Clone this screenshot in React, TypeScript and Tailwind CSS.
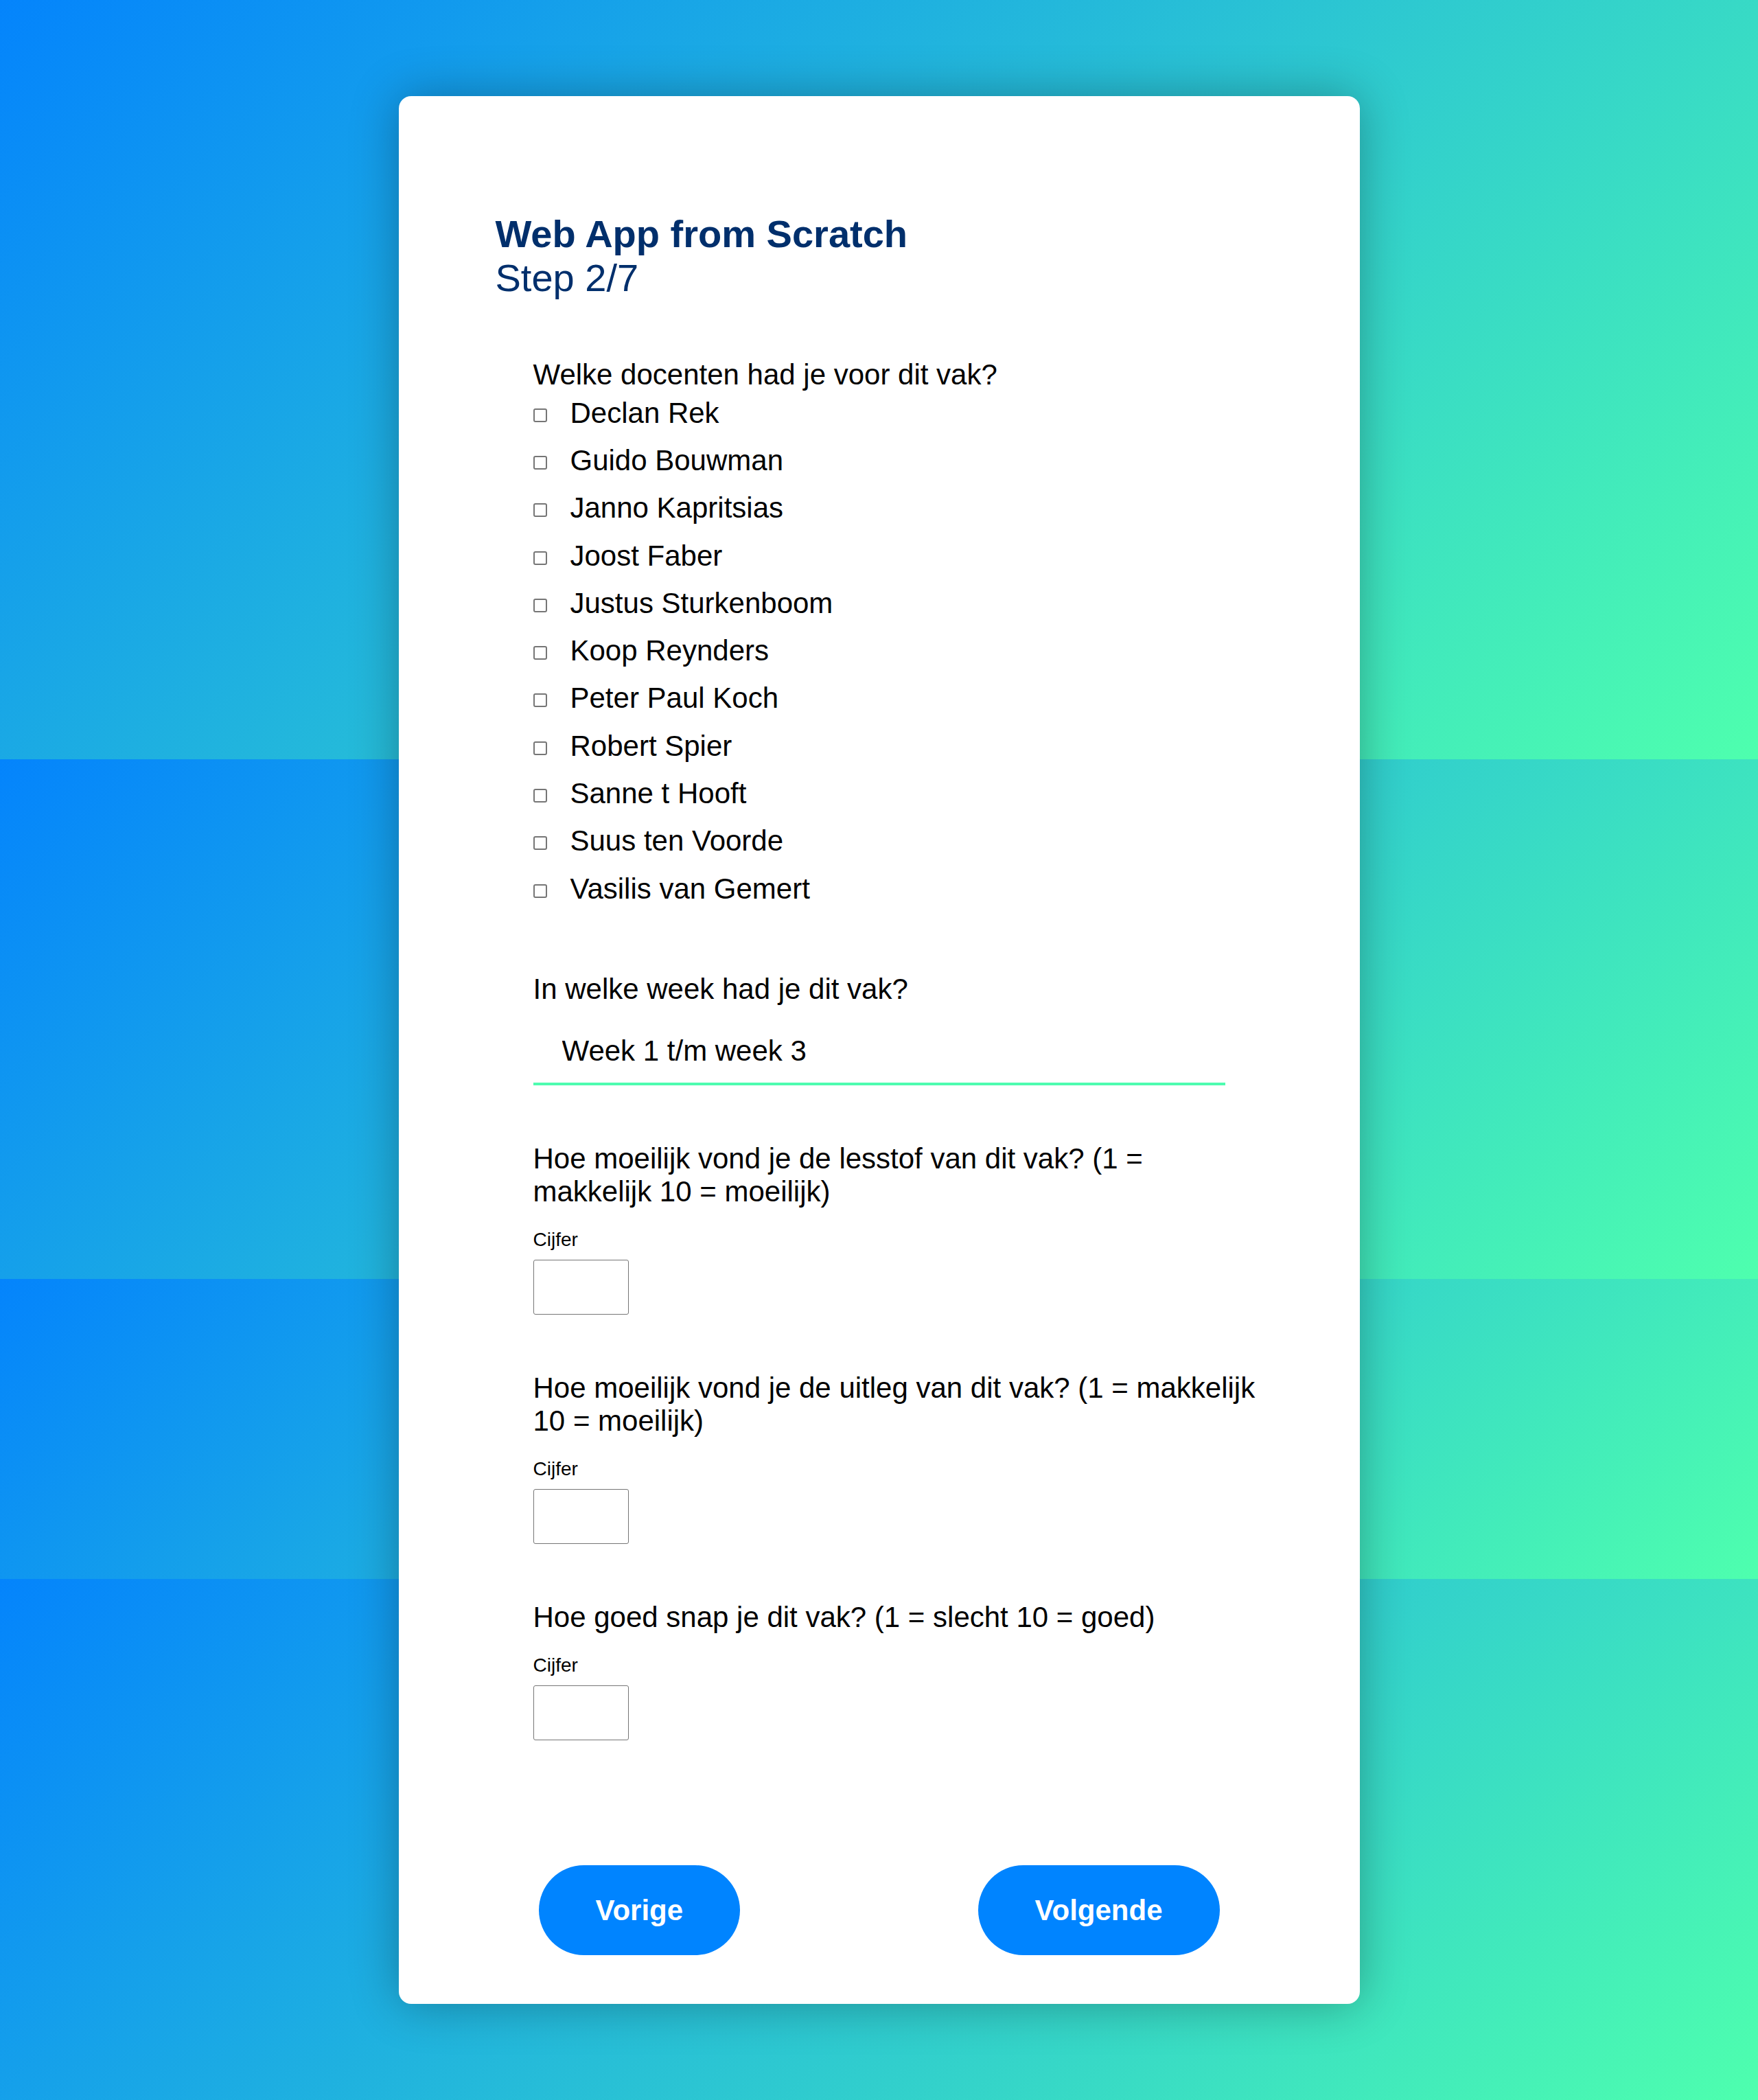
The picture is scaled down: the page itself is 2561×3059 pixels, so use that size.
import React from "react";

const teachers = [
  "Declan Rek",
  "Guido Bouwman",
  "Janno Kapritsias",
  "Joost Faber",
  "Justus Sturkenboom",
  "Koop Reynders",
  "Peter Paul Koch",
  "Robert Spier",
  "Sanne t Hooft",
  "Suus ten Voorde",
  "Vasilis van Gemert",
];

function Rating({ question }: { question: string }) {
  return (
    <div>
      <p className="mt-[83px] text-[42px] leading-[48px] text-black">{question}</p>
      <label className="mt-[30px] block text-[28px] leading-[32px] text-black">Cijfer</label>
      <input
        type="text"
        className="mt-[13px] block h-[80px] w-[139px] rounded-[3px] border border-[#767676] bg-white outline-none"
      />
    </div>
  );
}

export default function App() {
  return (
    <div className="relative min-h-[3059px] font-['Liberation_Sans',Arial,sans-serif]">
      <div className="absolute inset-0 flex flex-col">
        <div className="h-[1106px] flex-none bg-[linear-gradient(135deg,#0484fc,#4effae)]" />
        <div className="h-[757px] flex-none bg-[linear-gradient(135deg,#0484fc,#4effae)]" />
        <div className="h-[437px] flex-none bg-[linear-gradient(135deg,#0484fc,#4effae)]" />
        <div className="flex-1 bg-[linear-gradient(135deg,#0484fc,#4effae)]" />
      </div>
      <div className="relative pt-[140px] pb-[139px]">
        <div className="mx-auto w-[1400px] rounded-[18px] bg-white pt-[169px] pr-[141px] pb-[71px] pl-[141px] shadow-[0_0_70px_rgba(0,0,0,0.3)]">
          <h1 className="text-[56px] leading-[64px] text-[#002f6c]">
            <span className="block font-bold">Web App from Scratch</span>
            <span className="block font-normal">Step 2/7</span>
          </h1>
          <div className="pl-[55px]">
            <p className="mt-[85px] text-[42px] leading-[48px] text-black">
              Welke docenten had je voor dit vak?
            </p>
            <div className="mt-[-3px] flex flex-col">
              {teachers.map((t) => (
                <label key={t} className="flex h-[69.3px] items-center">
                  <span className="mt-[6px] box-border h-[20px] w-[20px] flex-none rounded-[3px] border-2 border-[#767676] bg-white" />
                  <span className="ml-[34px] text-[42px] leading-[48px] text-black">{t}</span>
                </label>
              ))}
            </div>
            <p className="mt-[88px] text-[42px] leading-[48px] text-black">In welke week had je dit vak?</p>
            <input
              readOnly
              value="Week 1 t/m week 3"
              className="box-border block h-[116px] w-[1008px] border-b-4 border-[#4efcb0] bg-white pt-[42px] pb-[22px] pl-[42px] text-[42px] leading-[48px] text-black outline-none"
            />
            <Rating question="Hoe moeilijk vond je de lesstof van dit vak? (1 = makkelijk 10 = moeilijk)" />
            <Rating question="Hoe moeilijk vond je de uitleg van dit vak? (1 = makkelijk 10 = moeilijk)" />
            <Rating question="Hoe goed snap je dit vak? (1 = slecht 10 = goed)" />
            <div className="mt-[182px] flex w-[1008px] justify-between">
              <button className="mx-[8px] h-[131px] rounded-full bg-[#0084ff] px-[83px] text-[42px] font-bold text-white">
                Vorige
              </button>
              <button className="mx-[8px] h-[131px] rounded-full bg-[#0084ff] px-[83px] text-[42px] font-bold text-white">
                Volgende
              </button>
            </div>
          </div>
        </div>
      </div>
    </div>
  );
}
